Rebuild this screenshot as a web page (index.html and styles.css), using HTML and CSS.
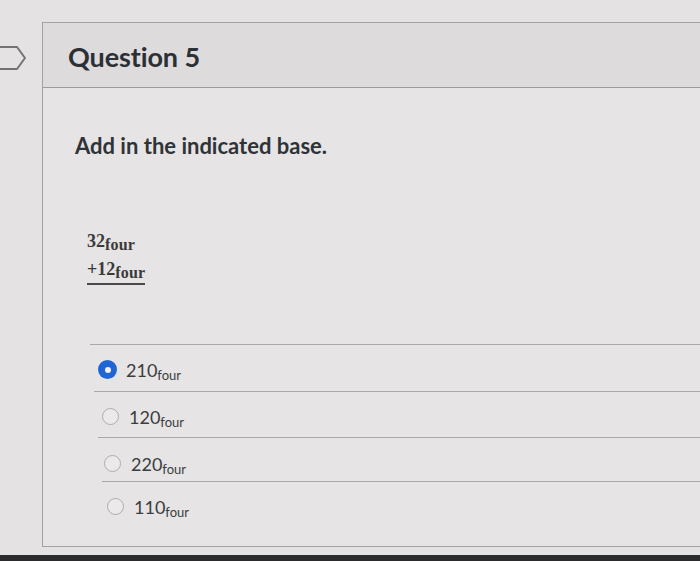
FILE: index.html
```html
<!DOCTYPE html>
<html>
<head>
<meta charset="utf-8">
<link rel="stylesheet" href="styles.css">
</head>
<body>
<div class="screen">
  <div class="main">
    <div class="tag-col">
      <svg class="tag" width="30" height="26" viewBox="0 0 30 26">
        <path d="M-4 2 H17 L25 13 L17 24 H-4" fill="none" stroke="#747275" stroke-width="2" stroke-linejoin="round"/>
      </svg>
    </div>
    <div class="card">
      <div class="header"><span class="qtitle">Question 5</span></div>
      <div class="body">
        <div class="prompt">Add in the indicated base.</div>
        <div class="problem">
          <div class="pline">32<sub>four</sub></div>
          <div class="pline plast">+12<sub>four</sub></div>
        </div>
        <div class="answers">
          <div class="answer a1"><div class="opt"><span class="radio checked"></span><span class="atext">210<sub>four</sub></span></div></div>
          <div class="answer a2"><div class="opt"><span class="radio"></span><span class="atext">120<sub>four</sub></span></div></div>
          <div class="answer a3"><div class="opt"><span class="radio"></span><span class="atext">220<sub>four</sub></span></div></div>
          <div class="answer a4"><div class="opt"><span class="radio"></span><span class="atext">110<sub>four</sub></span></div></div>
        </div>
      </div>
    </div>
  </div>
  <div class="bezel"></div>
</div>
</body>
</html>
```

FILE: styles.css
```css
html, body {
  margin: 0;
  padding: 0;
  background: #e3e1e2;
  font-family: Lato, "Liberation Sans", sans-serif;
  color: #2f3438;
  overflow: hidden;
}
.screen {
  width: 700px;
  height: 561px;
  display: flex;
  flex-direction: column;
  background: #e4e2e3;
}
.main {
  display: flex;
  padding-top: 22px;
  flex: 1;
}
.tag-col {
  width: 42px;
  flex: none;
  padding-top: 23px;
}
.tag { display: block; }
.card {
  flex: 1;
  height: 525px;
  box-sizing: border-box;
  border-top: 1px solid #a3a1a2;
  border-left: 1px solid #a3a1a2;
  border-bottom: 1px solid #a3a1a2;
  background: #e6e4e5;
  overflow: hidden;
}
.header {
  height: 65px;
  box-sizing: border-box;
  background: #dddbdc;
  border-bottom: 1px solid #9d9b9c;
  padding-left: 25px;
  padding-top: 2px;
  display: flex;
  align-items: center;
}
.qtitle {
  font-size: 27px;
  font-weight: 700;
  color: #2c3034;
  letter-spacing: -0.1px;
}
.body {
  padding-left: 32px;
}
.prompt {
  margin-top: 45px;
  font-size: 22px;
  font-weight: 700;
  line-height: 26px;
  color: #2f3337;
}
.problem {
  margin-top: 68px;
  margin-left: 12px;
  font-family: "Liberation Serif", serif;
  font-weight: 700;
  font-size: 18px;
  color: #3a3a3a;
  width: 58px;
}
.pline {
  line-height: 28px;
  height: 28px;
  white-space: nowrap;
}
.pline sub {
  font-size: 16px;
  line-height: 0;
  vertical-align: -3px;
  letter-spacing: 0.2px;
}
.plast {
  border-bottom: 2px solid #4a4a4a;
}
.answers {
  margin-top: 59px;
}
.answer {
  border-top: 1px solid #aaa8a9;
  box-sizing: border-box;
}
.opt {
  display: flex;
  align-items: center;
  height: 19px;
}
.a1 { height: 47px; margin-left: 15px; padding-left: 8px; padding-top: 15px; }
.a2 { height: 46px; margin-left: 19px; padding-left: 8px; padding-top: 15px; }
.a3 { height: 44px; margin-left: 23px; padding-left: 6px; padding-top: 16px; }
.a4 { height: 64px; margin-left: 27px; padding-left: 5px; padding-top: 15px; }
.radio {
  width: 17px;
  height: 17px;
  box-sizing: border-box;
  border-radius: 50%;
  border: 1px solid #aeacad;
  background: #ebe9ea;
  margin-right: 10px;
  flex: none;
  display: flex;
  align-items: center;
  justify-content: center;
}
.radio.checked {
  width: 19px;
  height: 19px;
  border: none;
  background: #1f66d4;
  margin-right: 9px;
}
.radio.checked::after {
  content: "";
  width: 6px;
  height: 6px;
  border-radius: 50%;
  background: #f2f2f2;
}
.atext {
  font-size: 18px;
  color: #3a3d40;
  line-height: 22px;
  white-space: nowrap;
}
.atext sub {
  font-size: 13px;
  line-height: 0;
  vertical-align: -3px;
}
.bezel {
  height: 6px;
  background: #2b2a2c;
}
```
